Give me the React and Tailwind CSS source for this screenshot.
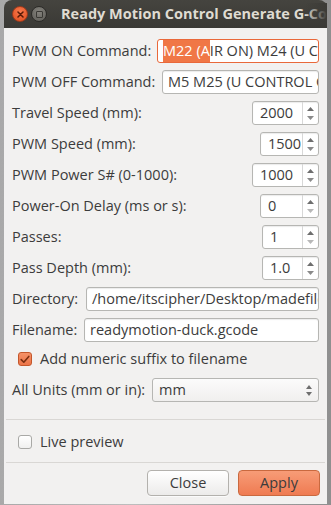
import React from 'react';

const font = { fontFamily: '"Open Sans", "Noto Sans", sans-serif' };

const SpinArrows = ({ downDim }) => (
  <div className="flex h-full w-[16px] flex-col items-center justify-center gap-[5px] border-l border-[#d8d8d8]">
    <svg width="7" height="4" viewBox="0 0 7 4"><path d="M0 4 L3.5 0 L7 4 Z" fill="#6e6e6e" /></svg>
    <svg width="7" height="4" viewBox="0 0 7 4"><path d="M0 0 L3.5 4 L7 0 Z" fill={downDim ? '#b8b8b8' : '#8a8a8a'} /></svg>
  </div>
);

const Row = ({ label, children }) => (
  <div className="flex h-[24px] items-center justify-between">
    <span className="whitespace-nowrap">{label}</span>
    {children}
  </div>
);

const Spin = ({ value, width, downDim }) => (
  <div
    className="flex h-[24px] items-center rounded-[3px] border border-[#b6b6b3] bg-white shadow-[inset_0_1px_1px_rgba(0,0,0,0.08)]"
    style={{ width }}
  >
    <span className="flex-1 pl-[7px] text-[#3c3c3c]">{value}</span>
    <SpinArrows downDim={downDim} />
  </div>
);

const TextBox = ({ children, className = '' }) => (
  <div className={`flex h-[24px] items-center overflow-hidden whitespace-nowrap rounded-[3px] border border-[#b6b6b3] bg-white pl-[5px] shadow-[inset_0_1px_1px_rgba(0,0,0,0.08)] ${className}`}>
    {children}
  </div>
);

export default function App() {
  return (
    <div className="h-[505px] w-[331px] overflow-hidden bg-[linear-gradient(90deg,#a9a9a9_0%,#bdbdbd_40%,#8f8f8f_100%)]" style={font}>
      <div className="ml-[4px] flex h-[504px] w-[323px] flex-col">
        {/* title bar */}
        <div className="flex h-[28px] items-center rounded-t-[8px] bg-[linear-gradient(180deg,#45443f,#3a3935)]">
          <div className="ml-[8px] flex h-[16px] w-[16px] items-center justify-center rounded-full border border-[#9e3a1c] bg-[radial-gradient(circle_at_50%_35%,#f77a4e,#df4b1b)]">
            <svg width="7" height="7" viewBox="0 0 7 7"><path d="M1 1 L6 6 M6 1 L1 6" stroke="#5a1a06" strokeWidth="1.5" strokeLinecap="round" /></svg>
          </div>
          <div className="ml-[3px] flex h-[16px] w-[16px] items-center justify-center rounded-full border border-[#2c2b28] bg-[radial-gradient(circle_at_50%_35%,#85837d,#5c5b56)]">
            <div className="h-[7px] w-[7px] rounded-[1px] border border-[#3a3935]" />
          </div>
          <div className="relative ml-[14px] flex-1 overflow-hidden whitespace-nowrap text-[14.5px] font-bold text-[#dfdbd2]">
            Ready Motion Control Generate G-Code
            <div className="absolute right-0 top-0 h-full w-[22px] bg-[linear-gradient(90deg,rgba(60,59,55,0),#3c3b37)]" />
          </div>
        </div>

        {/* body */}
        <div className="flex flex-1 flex-col bg-[#f2f1f0] text-[14.5px] text-[#3c3c3c]">
          <div className="flex flex-col gap-[7px] px-[8px] pt-[11px]">
            <Row label="PWM ON Command:">
              <TextBox className="w-[162px] border-[#e9683a] shadow-none">
                <span className="bg-[#f07746] text-white">M22 (A</span>
                <span>IR ON) M24 (U CONTROL ON)</span>
              </TextBox>
            </Row>
            <Row label="PWM OFF Command:">
              <TextBox className="w-[157px]">M5 M25 (U CONTROL OFF)</TextBox>
            </Row>
            <Row label="Travel Speed (mm):">
              <Spin value="2000" width={67} />
            </Row>
            <Row label="PWM Speed (mm):">
              <Spin value="1500" width={59} />
            </Row>
            <Row label="PWM Power S# (0-1000):">
              <Spin value="1000" width={67} />
            </Row>
            <Row label="Power-On Delay (ms or s):">
              <Spin value="0" width={59} downDim />
            </Row>
            <Row label="Passes:">
              <Spin value="1" width={57} downDim />
            </Row>
            <Row label="Pass Depth (mm):">
              <Spin value="1.0" width={57} />
            </Row>
            <Row label="Directory:">
              <TextBox className="w-[233px]">/home/itscipher/Desktop/madefile</TextBox>
            </Row>
            <Row label="Filename:">
              <TextBox className="w-[235px]">readymotion-duck.gcode</TextBox>
            </Row>
          </div>

          <div className="mt-[10px] flex h-[14px] items-center px-[14px]">
            <div className="flex h-[14px] w-[14px] items-center justify-center rounded-[3px] border border-[#c4572b] bg-[linear-gradient(180deg,#f59268,#ec7448)]">
              <svg width="10" height="9" viewBox="0 0 10 9"><path d="M1.2 4.6 L3.8 7.2 L8.8 1.4" stroke="#7a2e10" strokeWidth="1.6" fill="none" strokeLinecap="round" strokeLinejoin="round" /></svg>
            </div>
            <span className="ml-[8px]">Add numeric suffix to filename</span>
          </div>

          <div className="mt-[12px] px-[8px]">
            <Row label="All Units (mm or in):">
              <div className="flex h-[24px] w-[167px] items-center justify-between rounded-[3px] border border-[#b6b6b3] bg-[linear-gradient(180deg,#fbfbfb,#f0efee)] pl-[6px] pr-[6px]">
                <span>mm</span>
                <div className="flex flex-col gap-[3px]">
                  <svg width="6" height="4" viewBox="0 0 6 4"><path d="M0 4 L3 0 L6 4 Z" fill="#6e6e6e" /></svg>
                  <svg width="6" height="4" viewBox="0 0 6 4"><path d="M0 0 L3 4 L6 0 Z" fill="#6e6e6e" /></svg>
                </div>
              </div>
            </Row>
          </div>

          <div className="mx-[2px] mt-[17px] h-px bg-[#d9d7d4]" />

          <div className="mt-[15px] flex h-[14px] items-center px-[14px]">
            <div className="h-[14px] w-[14px] rounded-[3px] border border-[#a9a9a6] bg-[linear-gradient(180deg,#ffffff,#f0f0ef)]" />
            <span className="ml-[8px]">Live preview</span>
          </div>

          <div className="mx-[2px] mt-[13px] h-px bg-[#d9d7d4]" />

          <div className="mt-[7px] flex justify-end gap-[9px] pr-[7px]">
            <button className="flex h-[26px] w-[82px] items-center justify-center rounded-[4px] border border-[#b3b1ad] bg-[linear-gradient(180deg,#ffffff,#ecebea)] text-[#3c3c3c] shadow-[0_1px_0_rgba(255,255,255,0.7)]">
              Close
            </button>
            <button className="flex h-[26px] w-[82px] items-center justify-center rounded-[4px] border border-[#c9693f] bg-[linear-gradient(180deg,#f79c77,#ef7b52)] text-[#3c3c3c]">
              Apply
            </button>
          </div>
        </div>
      </div>
    </div>
  );
}
